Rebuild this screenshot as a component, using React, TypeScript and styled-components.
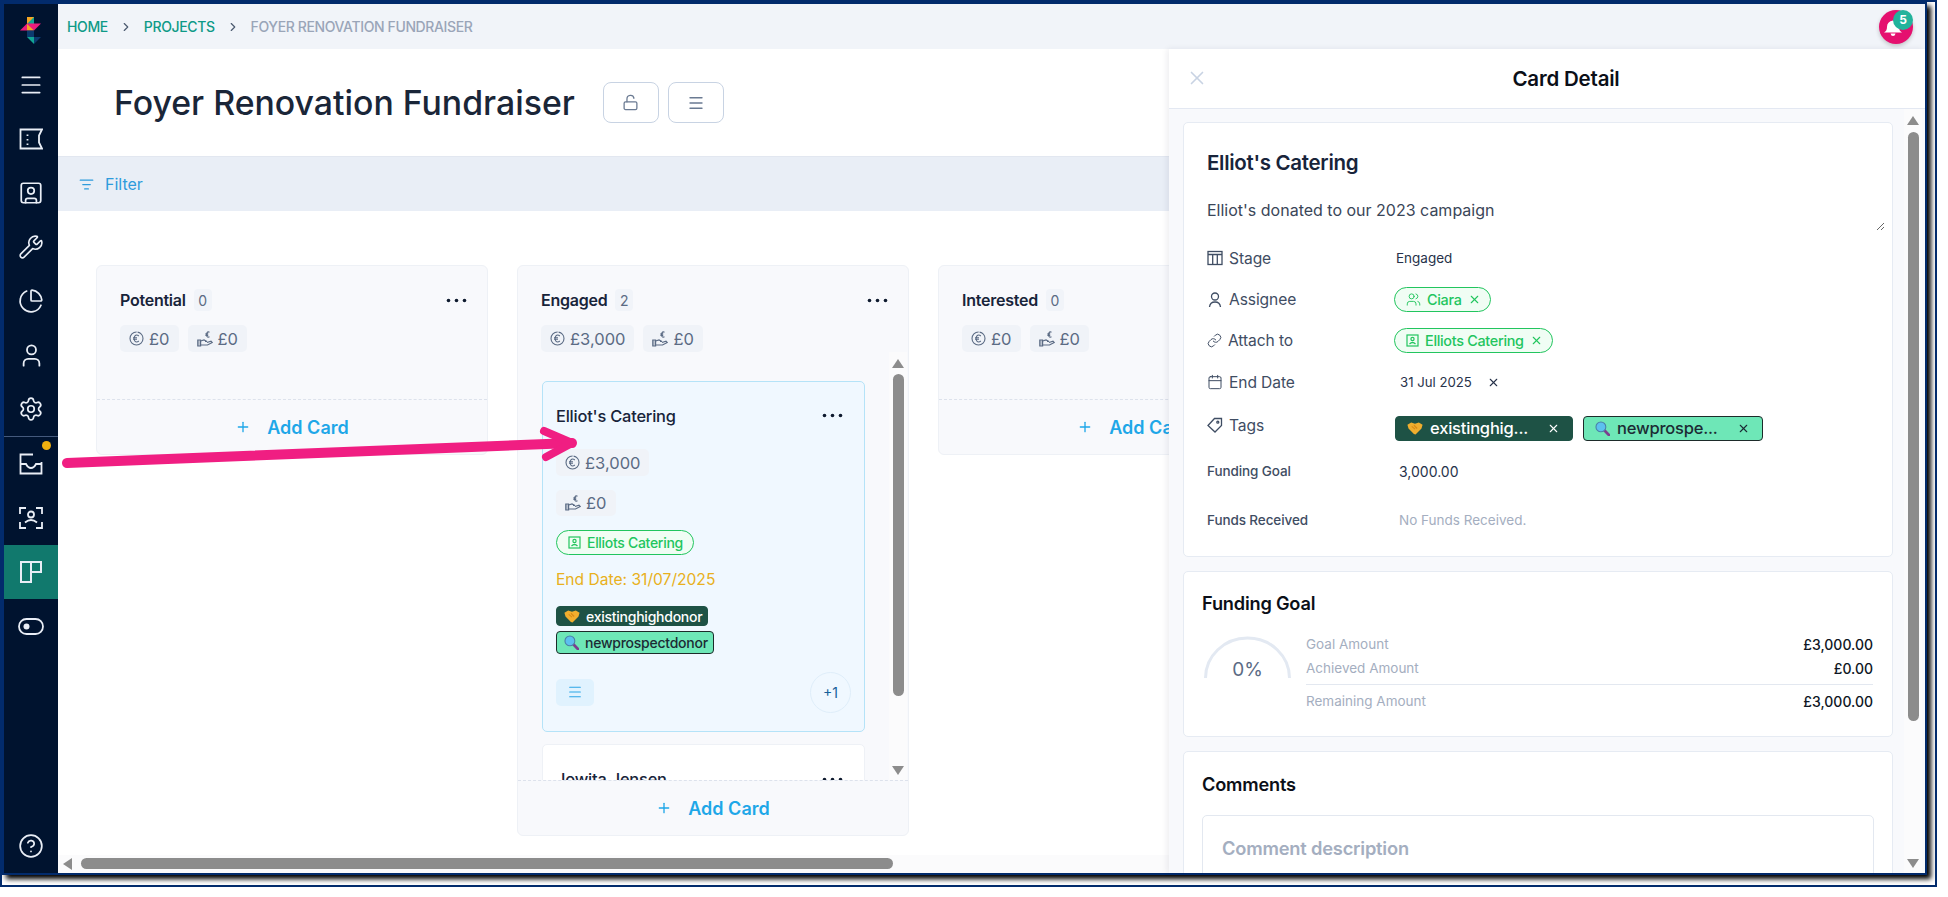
import React from "react";
import styled, { createGlobalStyle } from "styled-components";
import {
  Menu,
  SquareUser,
  Wrench,
  ChartPie,
  User,
  Settings,
  CircleHelp,
  LockOpen,
  ListFilter,
  Plus,
  X,
  Link,
  Calendar,
  Users,
  ChevronRight,
} from "lucide-react";

const FONT = `"Inter", "Noto Sans", sans-serif`;

const GlobalStyle = createGlobalStyle`
  html, body { margin: 0; padding: 0; background: #fff; overflow: hidden; }
  * { box-sizing: border-box; }
  body { font-family: ${FONT}; }
`;

const Frame = styled.div`
  width: 1937px;
  height: 887px;
  border: 2px solid #022b6c;
  background: #fff;
  overflow: hidden;
`;

const Window = styled.div`
  position: relative;
  width: 1925px;
  height: 873px;
  border: 2px solid #022b6c;
  background: #fff;
  box-shadow: 4px 4px 5px #000;
  display: flex;
`;

const Sidebar = styled.nav`
  width: 54px;
  flex: none;
  background: #00132f;
  display: flex;
  flex-direction: column;
`;

const NavItem = styled.div<{ $active?: boolean; $divider?: boolean; $bottom?: boolean }>`
  position: relative;
  height: ${(p) => (p.$divider ? 55 : 54)}px;
  flex: none;
  display: flex;
  align-items: center;
  justify-content: center;
  color: #e9eef6;
  background: ${(p) => (p.$active ? "#11796d" : "transparent")};
  border-bottom: ${(p) => (p.$divider ? "1px solid #44597c" : "none")};
  margin-top: ${(p) => (p.$bottom ? "auto" : "0")};
`;

const NavDot = styled.span`
  position: absolute;
  top: 4px;
  right: 7px;
  width: 9px;
  height: 9px;
  border-radius: 50%;
  background: #f0b010;
`;

const Main = styled.div`
  flex: 1;
  min-width: 0;
  display: flex;
  flex-direction: column;
`;

const TopBar = styled.header`
  height: 45px;
  flex: none;
  background: #f1f4f9;
  display: flex;
  align-items: center;
  padding: 0 12px 0 9px;
  font-size: 14px;
  font-weight: 500;
  letter-spacing: -0.38px;
`;

const Crumb = styled.span<{ $current?: boolean }>`
  color: ${(p) => (p.$current ? "#9aa5b8" : "#0e9a87")};
`;

const CrumbArrow = styled.span`
  display: flex;
  color: #4b5a70;
  margin: 0 11px 0 11px;
`;

const Bell = styled.div`
  position: relative;
  margin-left: auto;
  width: 34px;
  height: 34px;
  border-radius: 50%;
  background: #e5106f;
  box-shadow: 0 2px 4px rgba(0, 0, 0, 0.2);
  color: #fff;
  display: flex;
  align-items: flex-end;
  justify-content: center;
  padding: 0 6px 8px 0;
`;

const BellBadge = styled.span`
  position: absolute;
  top: 0;
  right: 0;
  width: 20px;
  height: 20px;
  border-radius: 50%;
  background: #22b39c;
  color: #fff;
  font-size: 12px;
  font-weight: 700;
  display: flex;
  align-items: center;
  justify-content: center;
`;

const TitleRow = styled.div`
  height: 107px;
  flex: none;
  display: flex;
  align-items: center;
  padding-left: 56px;
`;

const PageTitle = styled.h1`
  margin: 0 28px 0 0;
  font-size: 33.8px;
  font-weight: 500;
  color: #1a2638;
  white-space: nowrap;
`;

const OutlineButton = styled.button`
  width: 56px;
  height: 41px;
  margin-right: 9px;
  padding: 0;
  border: 1px solid #c8d3e3;
  border-radius: 8px;
  background: #fff;
  color: #6a7a92;
  display: flex;
  align-items: center;
  justify-content: center;
`;

const FilterBar = styled.div`
  height: 55px;
  flex: none;
  background: #e9eef6;
  border-top: 1px solid #e2e7f0;
  display: flex;
  align-items: center;
  padding-left: 21px;
  gap: 11px;
  color: #2e9bdc;
  font-size: 16px;
`;

const Board = styled.div`
  flex: 1;
  min-height: 0;
  display: flex;
  align-items: flex-start;
  gap: 29px;
  padding: 54px 0 0 38px;
  overflow: hidden;
`;

const Column = styled.section`
  width: 392px;
  flex: none;
  border: 1px solid #eef1f6;
  border-radius: 6px;
  background: #f8f9fc;
  position: relative;
`;

const ColumnHead = styled.div`
  padding: 23px 23px 0;
`;

const ColumnTitleRow = styled.div`
  display: flex;
  align-items: center;
  height: 22px;
`;

const ColumnTitle = styled.h3`
  margin: 0 8px 0 0;
  font-size: 16px;
  font-weight: 600;
  letter-spacing: -0.25px;
  color: #18243a;
`;

const CountBadge = styled.span`
  min-width: 18px;
  height: 22px;
  border-radius: 4px;
  background: #f1f4f9;
  color: #5b6b84;
  font-size: 14px;
  display: flex;
  align-items: center;
  justify-content: center;
`;

const Dots = styled.span<{ $inset: number }>`
  margin-left: auto;
  margin-right: ${(p) => p.$inset}px;
  display: flex;
  color: #0e1a2e;
`;

const ChipRow = styled.div`
  display: flex;
  gap: 9px;
  margin-top: 14px;
`;

const MoneyChip = styled.span<{ $mt?: number }>`
  height: 27px;
  padding: 0 9px;
  margin-top: ${(p) => p.$mt ?? 0}px;
  display: inline-flex;
  align-items: center;
  gap: 5px;
  border-radius: 5px;
  background: #f0f3f8;
  color: #5b6b84;
  font-size: 16.5px;
`;

const EmptyBody = styled.div`
  height: 47px;
`;

const ListBody = styled.div`
  position: relative;
  height: 428px;
  overflow: hidden;
  padding: 29px 0 0 24px;
`;

const FooterButton = styled.div`
  height: 55px;
  border-top: 1px dashed #dde2ec;
  display: flex;
  align-items: center;
  justify-content: center;
  gap: 16px;
  color: #1ea7e8;
  font-size: 18px;
  font-weight: 600;
`;

const Card = styled.article<{ $selected?: boolean }>`
  width: 323px;
  height: ${(p) => (p.$selected ? "351px" : "auto")};
  margin-bottom: 12px;
  padding: 22px 13px 18px;
  border: 1px solid ${(p) => (p.$selected ? "#b5e3f8" : "#eef1f6")};
  border-radius: 5px;
  background: ${(p) => (p.$selected ? "#f0f8ff" : "#fff")};
  display: flex;
  flex-direction: column;
  align-items: flex-start;
`;

const CardTitleRow = styled.div`
  width: 100%;
  height: 24px;
  display: flex;
  align-items: center;
`;

const CardTitle = styled.h4`
  margin: 0;
  font-size: 16.4px;
  font-weight: 500;
  letter-spacing: -0.2px;
  color: #18243a;
`;

const LinkChip = styled.span<{ $card?: boolean }>`
  height: 25px;
  padding: 0 ${(p) => (p.$card ? 10 : 9)}px 0 11px;
  margin: ${(p) => (p.$card ? "14px 0 0" : "0 0 0 -2px")};
  display: inline-flex;
  align-items: center;
  gap: 6px;
  border: 1px solid #22c55e;
  border-radius: 13px;
  background: #f0fdf4;
  color: #22c55e;
  font-size: ${(p) => (p.$card ? 14 : 14.4)}px;
  font-weight: 500;
  letter-spacing: -0.3px;
  white-space: nowrap;
`;

const EndDate = styled.div`
  margin-top: 15px;
  line-height: 20px;
  font-size: 15.6px;
  color: #e8b020;
`;

const TagPill = styled.span<{ $dark?: boolean; $mt?: number; $wide?: number }>`
  height: ${(p) => (p.$wide ? 25 : p.$dark ? 21 : 23)}px;
  width: ${(p) => (p.$wide ? `${p.$wide}px` : "auto")};
  margin-top: ${(p) => p.$mt ?? 0}px;
  padding: 0 5px 0 ${(p) => (p.$wide ? 11 : 7)}px;
  display: inline-flex;
  align-items: center;
  gap: ${(p) => (p.$wide ? 7 : 6)}px;
  border: 1px solid ${(p) => (p.$dark ? "#1e5245" : "#1d2b2a")};
  border-radius: 4px;
  background: ${(p) => (p.$dark ? "#1e5245" : "#6ee7b7")};
  color: ${(p) => (p.$dark ? "#fff" : "#1c2b34")};
  font-size: ${(p) => (p.$wide ? 16.5 : 14)}px;
  font-weight: 500;
  letter-spacing: ${(p) => (p.$wide ? -0.2 : -0.25)}px;
  white-space: nowrap;
`;

const CardFooter = styled.div`
  width: 100%;
  margin-top: 18px;
  display: flex;
  align-items: center;
  justify-content: space-between;
`;

const DescButton = styled.span`
  width: 38px;
  height: 27px;
  border-radius: 5px;
  background: #e0f2fe;
  color: #2aa5e6;
  display: flex;
  align-items: center;
  justify-content: center;
`;

const PlusCircle = styled.span`
  width: 41px;
  height: 41px;
  border: 1px solid #dfeefa;
  border-radius: 50%;
  color: #17609a;
  font-size: 14px;
  display: flex;
  align-items: center;
  justify-content: center;
`;

const Rail = styled.div<{ $right: number; $top: number; $bottom: number }>`
  position: absolute;
  right: ${(p) => p.$right}px;
  top: ${(p) => p.$top}px;
  bottom: ${(p) => p.$bottom}px;
  width: 18px;
  background: #fbfbfc;
`;

const RailThumb = styled.div<{ $top: number; $height: number }>`
  position: absolute;
  left: 4px;
  top: ${(p) => p.$top}px;
  width: 11px;
  height: ${(p) => p.$height}px;
  border-radius: 6px;
  background: #8c8c8c;
`;

const RailArrow = styled.span<{ $dir: "up" | "down" | "left"; $at: number }>`
  position: absolute;
  width: 0;
  height: 0;
  ${(p) =>
    p.$dir === "left"
      ? `left: ${p.$at}px; top: 3px; border-top: 6px solid transparent; border-bottom: 6px solid transparent; border-right: 9px solid #8c8c8c;`
      : `left: 3px; top: ${p.$at}px; border-left: 6px solid transparent; border-right: 6px solid transparent; ${
          p.$dir === "up" ? "border-bottom" : "border-top"
        }: 9px solid #8c8c8c;`}
`;

const BottomRail = styled.div`
  position: absolute;
  left: 54px;
  right: 0;
  bottom: 0;
  height: 18px;
  background: #fbfbfc;
`;

const BottomThumb = styled.div`
  position: absolute;
  left: 23px;
  top: 3px;
  width: 812px;
  height: 11px;
  border-radius: 6px;
  background: #8c8c8c;
`;

const Panel = styled.aside`
  position: absolute;
  top: 45px;
  right: 0;
  bottom: 0;
  width: 756px;
  background: #f8f9fc;
  box-shadow: -2px 0 6px rgba(20, 30, 60, 0.08);
  display: flex;
  flex-direction: column;
  overflow: hidden;
`;

const PanelHead = styled.div`
  position: relative;
  height: 60px;
  flex: none;
  background: #fff;
  border-bottom: 1px solid #e3e8f2;
  display: flex;
  align-items: center;
  justify-content: center;
  padding-left: 38px;
`;

const PanelClose = styled.span`
  position: absolute;
  left: 17px;
  top: 18px;
  display: flex;
  color: #c8d3e3;
`;

const PanelTitle = styled.h2`
  margin: 0;
  font-size: 20.5px;
  font-weight: 600;
  letter-spacing: -0.2px;
  color: #0b0f18;
`;

const PanelBody = styled.div`
  position: relative;
  flex: 1;
  min-height: 0;
  overflow: hidden;
  padding: 13px 0 0 14px;
`;

const Section = styled.section<{ $height?: number; $gap?: number }>`
  width: 710px;
  height: ${(p) => (p.$height ? `${p.$height}px` : "auto")};
  margin-bottom: ${(p) => p.$gap ?? 15}px;
  background: #fff;
  border: 1px solid #e6ebf3;
  border-radius: 5px;
`;

const DetailHead = styled.div`
  padding: 28px 23px 0;
  font-size: 20.5px;
  font-weight: 600;
  letter-spacing: -0.3px;
  line-height: 24px;
  color: #18243a;
`;

const Description = styled.textarea`
  display: block;
  width: 678px;
  height: 31px;
  margin: 25px 0 0 23px;
  padding: 0;
  border: none;
  outline: none;
  background: transparent;
  font-family: ${FONT};
  font-size: 16px;
  line-height: 20px;
  color: #3a4658;
`;

const Fields = styled.div`
  margin: 6px 0 0 23px;
`;

const FieldRow = styled.div<{ $h: number }>`
  height: ${(p) => p.$h}px;
  display: flex;
  align-items: center;
`;

const FieldLabel = styled.span<{ $small?: boolean }>`
  width: 189px;
  flex: none;
  display: flex;
  align-items: center;
  gap: 6px;
  color: #3f4d63;
  font-size: ${(p) => (p.$small ? 13.5 : 15.6)}px;
  font-weight: ${(p) => (p.$small ? 500 : 400)};
  letter-spacing: -0.1px;
`;

const FieldValue = styled.span<{ $muted?: boolean; $inset?: number; $size?: number }>`
  margin-left: ${(p) => p.$inset ?? 0}px;
  color: ${(p) => (p.$muted ? "#a4aec0" : "#27324a")};
  font-size: ${(p) => p.$size ?? 14}px;
  display: inline-flex;
  align-items: center;
  gap: 15px;
`;

const TagList = styled.div`
  display: flex;
  gap: 10px;
  margin: 6px 0 0 -1px;
`;

const TagRemove = styled.span`
  margin-left: auto;
  margin-right: 7px;
  display: flex;
`;

const SectionTitle = styled.h3`
  margin: 0;
  font-size: 18.2px;
  font-weight: 600;
  letter-spacing: -0.2px;
  line-height: 24px;
  color: #0b0f18;
`;

const GoalSection = styled(Section)`
  padding: 19px 19px 0 18px;
`;

const GoalBody = styled.div`
  display: flex;
  gap: 15px;
  margin-top: 17px;
`;

const Gauge = styled.div`
  position: relative;
  flex: none;
  width: 87px;
  height: 42px;
  margin: 4px 0 0 2px;
  display: flex;
`;

const GaugeText = styled.span`
  position: absolute;
  left: 0;
  right: 0;
  bottom: -3px;
  text-align: center;
  font-size: 19px;
  color: #5b6b84;
`;

const GoalRows = styled.div`
  flex: 1;
`;

const GoalRow = styled.div<{ $rule?: boolean }>`
  height: 24px;
  display: flex;
  align-items: center;
  justify-content: space-between;
  color: #a4aec0;
  font-size: 13.5px;
  margin-top: ${(p) => (p.$rule ? 4 : 0)}px;
`;

const GoalRule = styled.div`
  height: 1px;
  margin-top: 4px;
  background: #e3e8f0;
`;

const GoalAmount = styled.span`
  color: #0e1624;
  font-size: 14px;
  font-weight: 500;
`;

const CommentsSection = styled(Section)`
  padding: 20px 18px 0;
`;

const CommentBox = styled.div`
  height: 120px;
  margin-top: 19px;
  padding: 21px 19px;
  border: 1px solid #e3e8f0;
  border-radius: 5px;
  color: #a4aec0;
  font-size: 18.3px;
  font-weight: 600;
  letter-spacing: -0.2px;
`;

const Overlay = styled.svg`
  position: absolute;
  left: 0;
  top: 0;
  pointer-events: none;
`;

const Logo = () => (
  <svg width="22" height="28" viewBox="0 0 22 28">
    <polygon points="7,0 14,0 14,7 7,7" fill="#f5a623" />
    <polygon points="14,0 14,7 7,7" fill="#12a594" />
    <polygon points="0,13.5 7,6.5 7,13.5" fill="#ec1c7c" />
    <polygon points="7,6.5 21,6.5 14,13.5 7,13.5" fill="#ec1c7c" />
    <polygon points="7,7 14,13.5 7,13.5" fill="#f5a623" />
    <polygon points="7,13.5 14,13.5 14,20 7,20" fill="#0b3a6e" />
    <polygon points="7,20 14,20 14,27" fill="#12a594" />
    <polygon points="14,20 21,20 14,27" fill="#0b3a6e" />
  </svg>
);

const TicketIcon = () => (
  <svg width="24" height="22" viewBox="0 0 24 22" fill="none" stroke="currentColor" strokeWidth="1.8">
    <path d="M1.5 1.5H23L20 7.5V14.5L23 20.5H1.5Z" />
    <path d="M8.5 6.5v1.5M8.5 11v1.5M8.5 15.5v1.5" />
  </svg>
);

const InboxIcon = () => (
  <svg width="24" height="22" viewBox="0 0 24 22" fill="none" stroke="currentColor" strokeWidth="1.8">
    <path d="M14 1.5H1.5V20.5H22.5V9" />
    <path d="M1.5 11H7Q9 15 12 15T17 11H22.5" />
  </svg>
);

const ScanPersonIcon = () => (
  <svg width="24" height="22" viewBox="0 0 24 22" fill="none" stroke="currentColor" strokeWidth="1.8">
    <path d="M7 1H1V7M17 1H23V7M1 15V21H7M23 15V21H17" />
    <circle cx="12" cy="7.5" r="3" />
    <path d="M6 15.5Q12 10.5 18 15.5" />
  </svg>
);

const BoardIcon = () => (
  <svg width="22" height="22" viewBox="0 0 22 22" fill="none" stroke="currentColor" strokeWidth="2">
    <path d="M1 1H21V11H11V21H1Z" />
    <path d="M11 1V11" />
  </svg>
);

const ToggleIcon = () => (
  <svg width="26" height="17" viewBox="0 0 26 17" fill="none" stroke="currentColor" strokeWidth="1.8">
    <rect x="1" y="1" width="24" height="15" rx="7.5" />
    <circle cx="8.5" cy="8.5" r="3" fill="currentColor" stroke="none" />
  </svg>
);

const EuroIcon = () => (
  <svg width="15" height="15" viewBox="0 0 15 15" fill="none" stroke="currentColor" strokeWidth="1.1">
    <circle cx="7.5" cy="7.5" r="6.5" strokeDasharray="30 1" />
    <path d="M9.8 5Q8.8 4 7.6 4 5.5 4 5 7.5 5.5 11 7.6 11 8.8 11 9.8 10M4 6.7H8M4 8.3H8" />
  </svg>
);

const HandIcon = () => (
  <svg width="16" height="16" viewBox="0 0 16 16" fill="none" stroke="currentColor" strokeWidth="1.2">
    <path d="M.8 9H3.6V15H.8Z" fill="currentColor" fillOpacity=".35" />
    <path d="M3.6 10 7 9 10 10.5H8M3.6 14H10.5L15.2 11.5 14 10.2 10 11.5" />
    <path d="M12.5 1.2Q10.8 .4 9.9 2 9.3 3.6 9.9 5.2 10.8 6.6 12.5 5.8M8.4 2.8H11.2M8.4 4.3H11.2" />
  </svg>
);

const ContactChipIcon = () => (
  <svg width="13" height="13" viewBox="0 0 13 13" fill="none" stroke="currentColor" strokeWidth="1.2">
    <rect x="1" y="1" width="11" height="11" />
    <circle cx="6.5" cy="5" r="1.6" />
    <path d="M3.5 10Q6.5 7 9.5 10" />
  </svg>
);

const StageIcon = () => (
  <svg width="16" height="16" viewBox="0 0 16 16" fill="none" stroke="currentColor" strokeWidth="1.3">
    <rect x="1" y="1.5" width="14" height="13" />
    <path d="M1 4.5H15M5.7 4.5V14.5M10.3 4.5V14.5" />
  </svg>
);

const AssigneeIcon = () => (
  <svg width="16" height="16" viewBox="0 0 16 16" fill="none" stroke="currentColor" strokeWidth="1.3">
    <circle cx="8" cy="4.5" r="3.5" />
    <path d="M2.5 15Q3 10 8 10T13.5 15" />
  </svg>
);

const TagIcon = () => (
  <svg width="16" height="16" viewBox="0 0 16 16" fill="none" stroke="currentColor" strokeWidth="1.3">
    <path d="M1 8.5 7.5 1.5H14.5V8.5L8 15Z" />
    <circle cx="10.8" cy="5.2" r="1" />
  </svg>
);

const Handshake = () => (
  <svg width="16" height="13" viewBox="0 0 14 12">
    <path d="M0 2.5 3.5 .5 7 1.5 10.5 .5 14 2.5 13 6 7.5 11.5 6 11 1 6Z" fill="#f0ae2e" />
    <path d="M4 4 7 6.5M6 3 9 6" stroke="#d98a14" strokeWidth="1" fill="none" />
  </svg>
);

const Magnifier = () => (
  <svg width="15" height="15" viewBox="0 0 14 14">
    <path d="M8 8 13 13" stroke="#7b3f8f" strokeWidth="2.6" strokeLinecap="round" />
    <circle cx="5.5" cy="5.5" r="4.6" fill="#5cc0ee" stroke="#4a7fa8" strokeWidth="1" />
  </svg>
);

const MoreDots = () => (
  <svg width="21" height="5" viewBox="0 0 21 5" fill="currentColor">
    <circle cx="2.5" cy="2.5" r="1.8" />
    <circle cx="10.5" cy="2.5" r="1.8" />
    <circle cx="18.5" cy="2.5" r="1.8" />
  </svg>
);

const BellIcon = () => (
  <svg width="20" height="16" viewBox="0 0 20 16" fill="currentColor">
    <path d="M1 12.5Q4 11 4 7 4 1.5 10 .5 16 1.5 16 7 16 11 19 12.5Z" />
    <path d="M7.5 13.5H12.5Q12 16 10 16T7.5 13.5Z" />
  </svg>
);

const navTop = [
  <Menu key="menu" size={26} strokeWidth={1.6} />,
  <TicketIcon key="ticket" />,
  <SquareUser key="contact" size={26} strokeWidth={1.6} />,
  <Wrench key="wrench" size={26} strokeWidth={1.5} />,
  <ChartPie key="pie" size={26} strokeWidth={1.6} />,
  <User key="user" size={27} strokeWidth={1.6} />,
];

type ColumnProps = {
  title: string;
  count: number;
  goal: string;
  children?: React.ReactNode;
};

const BoardColumn = ({ title, count, goal, children }: ColumnProps) => (
  <Column>
    <ColumnHead>
      <ColumnTitleRow>
        <ColumnTitle>{title}</ColumnTitle>
        <CountBadge>{count}</CountBadge>
        <Dots $inset={-3}>
          <MoreDots />
        </Dots>
      </ColumnTitleRow>
      <ChipRow>
        <MoneyChip>
          <EuroIcon />
          {goal}
        </MoneyChip>
        <MoneyChip>
          <HandIcon />
          £0
        </MoneyChip>
      </ChipRow>
    </ColumnHead>
    {children ?? <EmptyBody />}
    <FooterButton>
      <Plus size={16} strokeWidth={2} />
      Add Card
    </FooterButton>
  </Column>
);

export default function App() {
  return (
    <>
      <GlobalStyle />
      <Frame>
        <Window>
          <Sidebar>
            <NavItem>
              <Logo />
            </NavItem>
            {navTop.map((icon) => (
              <NavItem key={icon.key}>{icon}</NavItem>
            ))}
            <NavItem $divider>
              <Settings size={26} strokeWidth={1.6} />
            </NavItem>
            <NavItem>
              <InboxIcon />
              <NavDot />
            </NavItem>
            <NavItem>
              <ScanPersonIcon />
            </NavItem>
            <NavItem $active>
              <BoardIcon />
            </NavItem>
            <NavItem>
              <ToggleIcon />
            </NavItem>
            <NavItem $bottom>
              <CircleHelp size={26} strokeWidth={1.6} />
            </NavItem>
          </Sidebar>

          <Main>
            <TopBar>
              <Crumb>HOME</Crumb>
              <CrumbArrow>
                <ChevronRight size={14} strokeWidth={2} />
              </CrumbArrow>
              <Crumb>PROJECTS</Crumb>
              <CrumbArrow>
                <ChevronRight size={14} strokeWidth={2} />
              </CrumbArrow>
              <Crumb $current>FOYER RENOVATION FUNDRAISER</Crumb>
              <Bell>
                <BellIcon />
                <BellBadge>5</BellBadge>
              </Bell>
            </TopBar>
            <TitleRow>
              <PageTitle>Foyer Renovation Fundraiser</PageTitle>
              <OutlineButton>
                <LockOpen size={17} strokeWidth={1.8} />
              </OutlineButton>
              <OutlineButton>
                <Menu size={18} strokeWidth={1.8} />
              </OutlineButton>
            </TitleRow>
            <FilterBar>
              <ListFilter size={15} strokeWidth={2} />
              Filter
            </FilterBar>
            <Board>
              <BoardColumn title="Potential" count={0} goal="£0" />
              <BoardColumn title="Engaged" count={2} goal="£3,000">
                <ListBody>
                  <Card $selected>
                    <CardTitleRow>
                      <CardTitle>Elliot's Catering</CardTitle>
                      <Dots $inset={8}>
                        <MoreDots />
                      </Dots>
                    </CardTitleRow>
                    <MoneyChip $mt={22}>
                      <EuroIcon />
                      £3,000
                    </MoneyChip>
                    <MoneyChip $mt={14}>
                      <HandIcon />
                      £0
                    </MoneyChip>
                    <LinkChip $card>
                      <ContactChipIcon />
                      Elliots Catering
                    </LinkChip>
                    <EndDate>End Date: 31/07/2025</EndDate>
                    <TagPill $dark $mt={16}>
                      <Handshake />
                      existinghighdonor
                    </TagPill>
                    <TagPill $mt={5}>
                      <Magnifier />
                      newprospectdonor
                    </TagPill>
                    <CardFooter>
                      <DescButton>
                        <Menu size={16} strokeWidth={1.6} />
                      </DescButton>
                      <PlusCircle>+1</PlusCircle>
                    </CardFooter>
                  </Card>
                  <Card>
                    <CardTitleRow>
                      <CardTitle>Jowita Jensen</CardTitle>
                      <Dots $inset={8}>
                        <MoreDots />
                      </Dots>
                    </CardTitleRow>
                  </Card>
                  <Rail $right={1} $top={0} $bottom={0}>
                    <RailArrow $dir="up" $at={7} />
                    <RailThumb $top={22} $height={322} />
                    <RailArrow $dir="down" $at={414} />
                  </Rail>
                </ListBody>
              </BoardColumn>
              <BoardColumn title="Interested" count={0} goal="£0" />
            </Board>
          </Main>

          <BottomRail>
            <RailArrow $dir="left" $at={5} />
            <BottomThumb />
          </BottomRail>

          <Panel>
            <PanelHead>
              <PanelClose>
                <X size={22} strokeWidth={1.8} />
              </PanelClose>
              <PanelTitle>Card Detail</PanelTitle>
            </PanelHead>
            <PanelBody>
              <Section $height={435} $gap={14}>
                <DetailHead>Elliot's Catering</DetailHead>
                <Description defaultValue="Elliot's donated to our 2023 campaign" />
                <Fields>
                  <FieldRow $h={42}>
                    <FieldLabel>
                      <StageIcon />
                      Stage
                    </FieldLabel>
                    <FieldValue $size={13.5}>Engaged</FieldValue>
                  </FieldRow>
                  <FieldRow $h={41}>
                    <FieldLabel>
                      <AssigneeIcon />
                      Assignee
                    </FieldLabel>
                    <LinkChip>
                      <Users size={15} strokeWidth={1.5} />
                      Ciara
                      <X size={13} strokeWidth={2} />
                    </LinkChip>
                  </FieldRow>
                  <FieldRow $h={41}>
                    <FieldLabel>
                      <Link size={15} strokeWidth={1.6} />
                      Attach to
                    </FieldLabel>
                    <LinkChip>
                      <ContactChipIcon />
                      Elliots Catering
                      <X size={13} strokeWidth={2} />
                    </LinkChip>
                  </FieldRow>
                  <FieldRow $h={42}>
                    <FieldLabel>
                      <Calendar size={16} strokeWidth={1.5} />
                      End Date
                    </FieldLabel>
                    <FieldValue $inset={4} $size={13.2}>
                      31 Jul 2025
                      <X size={13} strokeWidth={2} />
                    </FieldValue>
                  </FieldRow>
                  <FieldRow $h={44}>
                    <FieldLabel>
                      <TagIcon />
                      Tags
                    </FieldLabel>
                    <TagList>
                      <TagPill $dark $wide={178}>
                        <Handshake />
                        existinghig...
                        <TagRemove>
                          <X size={13} strokeWidth={2} />
                        </TagRemove>
                      </TagPill>
                      <TagPill $wide={180}>
                        <Magnifier />
                        newprospe...
                        <TagRemove>
                          <X size={13} strokeWidth={2} />
                        </TagRemove>
                      </TagPill>
                    </TagList>
                  </FieldRow>
                  <FieldRow $h={48}>
                    <FieldLabel $small>Funding Goal</FieldLabel>
                    <FieldValue $inset={3}>3,000.00</FieldValue>
                  </FieldRow>
                  <FieldRow $h={50}>
                    <FieldLabel $small>Funds Received</FieldLabel>
                    <FieldValue $inset={3} $muted $size={13.5}>
                      No Funds Received.
                    </FieldValue>
                  </FieldRow>
                </Fields>
              </Section>
              <GoalSection $height={166} $gap={14}>
                <SectionTitle>Funding Goal</SectionTitle>
                <GoalBody>
                  <Gauge>
                    <svg width="87" height="42" viewBox="0 0 87 42" fill="none">
                      <path d="M1.5 42A42 40 0 0 1 85.5 42" stroke="#e3e9f2" strokeWidth="3" />
                    </svg>
                    <GaugeText>0%</GaugeText>
                  </Gauge>
                  <GoalRows>
                    <GoalRow>
                      Goal Amount
                      <GoalAmount>£3,000.00</GoalAmount>
                    </GoalRow>
                    <GoalRow>
                      Achieved Amount
                      <GoalAmount>£0.00</GoalAmount>
                    </GoalRow>
                    <GoalRule />
                    <GoalRow $rule>
                      Remaining Amount
                      <GoalAmount>£3,000.00</GoalAmount>
                    </GoalRow>
                  </GoalRows>
                </GoalBody>
              </GoalSection>
              <CommentsSection>
                <SectionTitle>Comments</SectionTitle>
                <CommentBox>Comment description</CommentBox>
              </CommentsSection>
              <Rail $right={3} $top={0} $bottom={0}>
                <RailArrow $dir="up" $at={7} />
                <RailThumb $top={23} $height={589} />
                <RailArrow $dir="down" $at={750} />
              </Rail>
            </PanelBody>
          </Panel>

          <Overlay width="1921" height="869" viewBox="4 4 1921 869">
            <g stroke="#f01e82" fill="none" strokeLinecap="round" strokeLinejoin="round">
              <path d="M67 463 572 443" strokeWidth="10" />
              <path d="M544 431 572 443 546 457" strokeWidth="8" />
            </g>
          </Overlay>
        </Window>
      </Frame>
    </>
  );
}
